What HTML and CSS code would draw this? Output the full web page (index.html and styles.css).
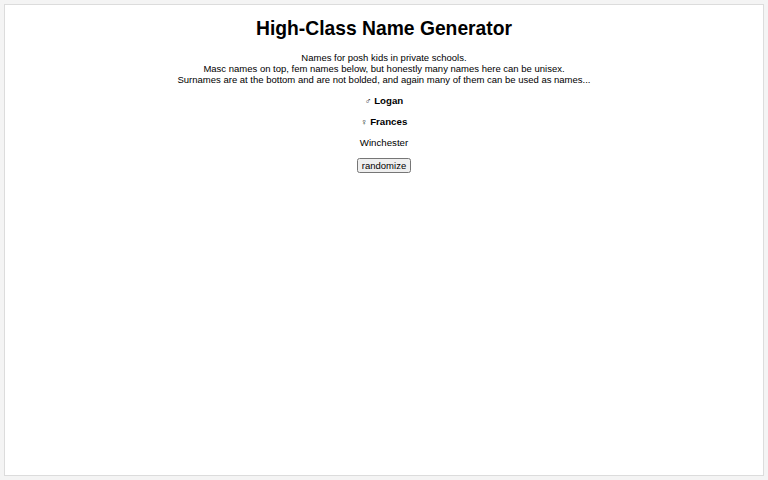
FILE: index.html
```html
<!DOCTYPE html>
<html>
<head>
<meta charset="utf-8">
<link rel="stylesheet" href="styles.css">
</head>
<body>
<main class="card">
  <h1 class="title">High-Class Name Generator</h1>
  <p class="intro">Names for posh kids in private schools.<br>Masc names on top, fem names below, but honestly many names here can be unisex.<br>Surnames are at the bottom and are not bolded, and again many of them can be used as names...</p>
  <p class="name bold"><span class="sym">♂</span> Logan</p>
  <p class="name bold"><span class="sym">♀</span> Frances</p>
  <p class="name last">Winchester</p>
  <button class="btn" type="button">randomize</button>
</main>
</body>
</html>
```
FILE: styles.css
```css
html, body {
  margin: 0;
  padding: 0;
  height: 100%;
}
body {
  background: #f4f4f4;
  font-family: "Liberation Sans", Arial, sans-serif;
  color: #000;
  padding: 4px;
  box-sizing: border-box;
}
.card {
  background: #fff;
  border: 1px solid #dcdcdc;
  height: 100%;
  box-sizing: border-box;
  display: flex;
  flex-direction: column;
  align-items: center;
  text-align: center;
  padding-top: 13px;
}
.title {
  font-size: 19.3px;
  line-height: 22px;
  font-weight: bold;
  margin: 0 0 12px;
}
.intro {
  font-size: 9.5px;
  line-height: 11px;
  margin: 0 0 10px;
}
.name {
  font-size: 9.7px;
  margin: 0 0 9.6px;
  line-height: 11.5px;
}
.name.last { margin-bottom: 9px; }
.bold { font-weight: bold; }
.sym {
  font-size: 9px;
  line-height: 0;
  font-weight: normal;
  color: #222;
}
.btn {
  font-family: "Liberation Sans", Arial, sans-serif;
  font-size: 9.5px;
  line-height: 11px;
  padding: 0 3px;
  margin: 0;
}
```
